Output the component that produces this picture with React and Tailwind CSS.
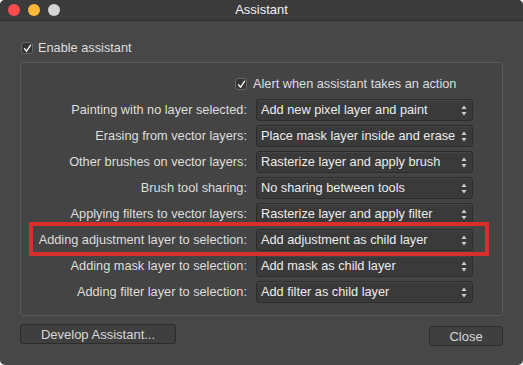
const rows = [
  ["Painting with no layer selected:", "Add new pixel layer and paint"],
  ["Erasing from vector layers:", "Place mask layer inside and erase"],
  ["Other brushes on vector layers:", "Rasterize layer and apply brush"],
  ["Brush tool sharing:", "No sharing between tools"],
  ["Applying filters to vector layers:", "Rasterize layer and apply filter"],
  ["Adding adjustment layer to selection:", "Add adjustment as child layer"],
  ["Adding mask layer to selection:", "Add mask as child layer"],
  ["Adding filter layer to selection:", "Add filter as child layer"],
];

function Check() {
  return (
    <span className="w-[12px] h-[12px] rounded-[3px] bg-[#353535] border border-[#666666] flex items-center justify-center shrink-0">
      <svg width="9" height="9" viewBox="0 0 9 9">
        <path d="M1.5 4.8 L3.6 7.2 L7.6 1.2" fill="none" stroke="#f2f2f2" strokeWidth="1.4" strokeLinecap="round" strokeLinejoin="round" />
      </svg>
    </span>
  );
}

function Stepper() {
  return (
    <svg width="6" height="11" viewBox="0 0 6 11">
      <path d="M3 0.5 L5.5 4 L0.5 4 Z" fill="#cfcfcf" />
      <path d="M3 10.5 L5.5 7 L0.5 7 Z" fill="#cfcfcf" />
    </svg>
  );
}

export default function App() {
  return (
    <div className="w-[523px] h-[365px] bg-white" style={{ fontFamily: '"Liberation Sans", Arial, sans-serif' }}>
      <div className="w-full h-full bg-[#474747] rounded-[5px] overflow-hidden flex flex-col text-[12.75px] text-[#dedede]">
        {/* Title bar */}
        <div className="relative h-[21px] bg-[#3b3b3b] border-b border-[#2e2e2e] flex items-center justify-center shrink-0">
          <div className="absolute left-[8px] top-[4px] flex gap-[8px]">
            <span className="w-[12px] h-[12px] rounded-full bg-[#fc4a4f]" />
            <span className="w-[12px] h-[12px] rounded-full bg-[#fcb63a]" />
            <span className="w-[12px] h-[12px] rounded-full bg-[#d6d6d6]" />
          </div>
          <span className="text-[#f0f0f0] text-[13px]">Assistant</span>
        </div>

        <div className="px-[20px] pt-[20px] flex flex-col">
          <label className="flex items-center gap-[5px] h-[14px] pl-[1px]">
            <Check />
            <span>Enable assistant</span>
          </label>

          {/* Group box */}
          <div className="relative mt-[7px] h-[254px] border border-[#5a5a5a] rounded-[4px] bg-[#444444]">
            <label className="flex items-center gap-[6px] h-[14px] mt-[14px] pl-[214px]">
              <Check />
              <span>Alert when assistant takes an action</span>
            </label>

            <div className="grid grid-cols-[226px_217px] gap-x-[9px] gap-y-[4px] mt-[8px]">
              {rows.map(([label, value]) => (
                <div key={label} className="contents">
                  <div className="h-[22px] flex items-center justify-end whitespace-nowrap">{label}</div>
                  <div className="h-[22px] flex items-center justify-between pl-[4px] pr-[5px] bg-[#3a3a3a] border border-[#2c2c2c] rounded-[3px] text-[#ececec] whitespace-nowrap shadow-[inset_0_1px_0_#464646]">
                    <span>{value}</span>
                    <Stepper />
                  </div>
                </div>
              ))}
            </div>

            {/* Highlight annotation */}
            <div className="absolute left-[8px] top-[159px] w-[460px] h-[34px] border-[4px] border-[#d7302c] pointer-events-none" />
          </div>

          {/* Buttons */}
          <div className="flex justify-between mt-[8px]">
            <button className="w-[156px] h-[20px] bg-[#3f3f3f] border border-[#2c2c2c] rounded-[3px] text-[#d8d8d8] text-[13px] leading-none">
              Develop Assistant...
            </button>
            <button className="w-[74px] h-[20px] mt-[2px] bg-[#3f3f3f] border border-[#2c2c2c] rounded-[3px] text-[#d8d8d8] text-[13px] leading-none">
              Close
            </button>
          </div>
        </div>
      </div>
    </div>
  );
}
